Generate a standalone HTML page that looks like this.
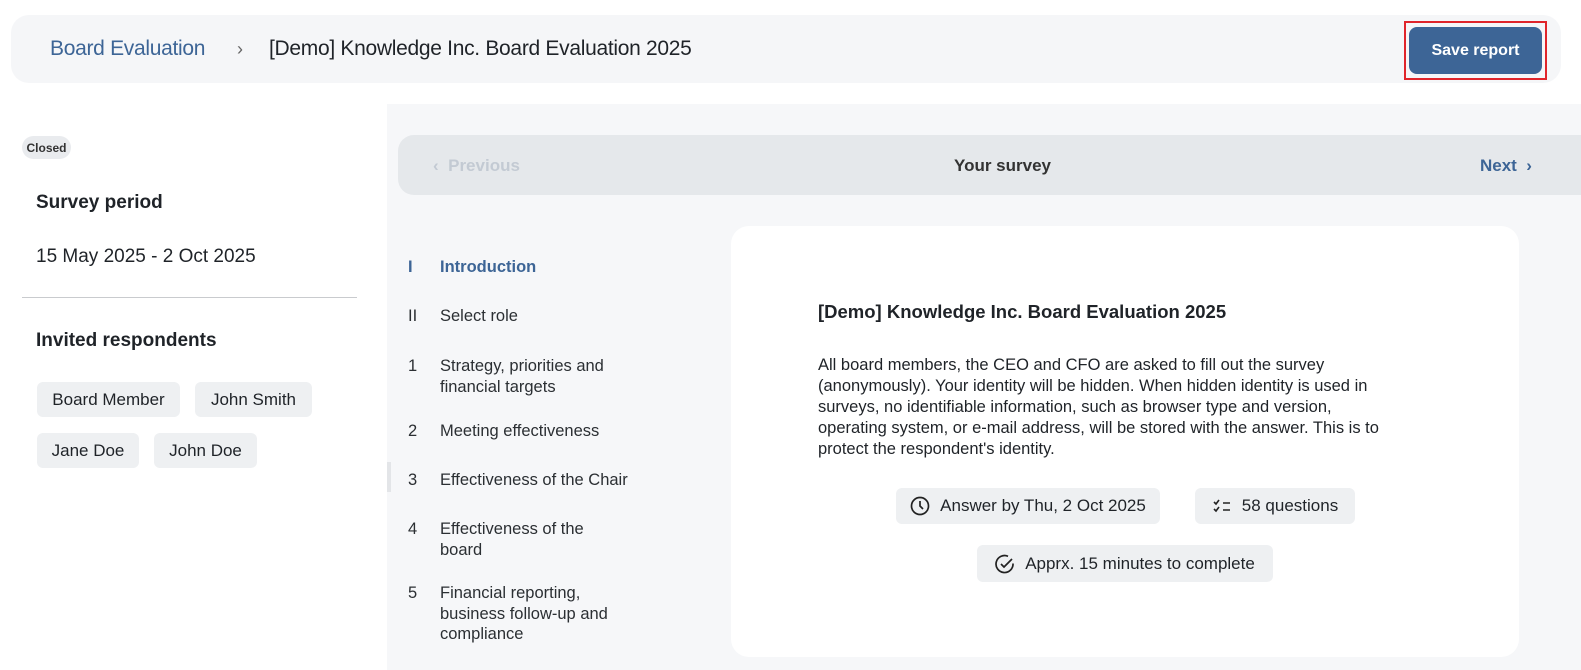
<!DOCTYPE html>
<html><head><style>
*{margin:0;padding:0;box-sizing:border-box}
body{width:1581px;height:670px;overflow:hidden;background:#fff;font-family:"Liberation Sans",sans-serif;color:#1f2328;position:relative}
.a{position:absolute;white-space:nowrap}
.chip{position:absolute;background:#eef0f2;border-radius:6px;font-size:17px;display:flex;align-items:center;justify-content:center;gap:10px}
.toc{position:absolute;font-size:16.5px;color:#2b2f33;line-height:20.5px}
.toc .n{position:absolute;left:0;width:20px}
.toc .t{position:absolute;left:32px;white-space:nowrap}
</style></head><body>
<div class="a" style="left:11px;top:15px;width:1550px;height:68px;background:#f5f6f8;border-radius:18px"></div>
<div class="a" style="left:50px;top:37px;font-size:21px;color:#3d6596;letter-spacing:-0.3px">Board Evaluation</div>
<div class="a" style="left:237px;top:39px;font-size:18px;color:#666">›</div>
<div class="a" style="left:269px;top:37px;font-size:21px;color:#1f2328;letter-spacing:-0.3px">[Demo] Knowledge Inc. Board Evaluation 2025</div>
<div class="a" style="left:1404px;top:21px;width:143px;height:59px;border:2px solid #e0252b"></div>
<div class="a" style="left:1409px;top:27px;width:133px;height:47px;background:#3d6596;border-radius:8px;color:#fff;font-weight:bold;font-size:16px;display:flex;align-items:center;justify-content:center">Save report</div>

<div class="a" style="left:22px;top:136px;width:49px;height:23px;background:#e9ebee;border-radius:12px;font-size:12px;font-weight:bold;display:flex;align-items:center;justify-content:center;color:#333">Closed</div>
<div class="a" style="left:36px;top:192px;font-size:19px;font-weight:bold">Survey period</div>
<div class="a" style="left:36px;top:246px;font-size:19px">15 May 2025 - 2 Oct 2025</div>
<div class="a" style="left:22px;top:297px;width:335px;height:1px;background:#c9cbce"></div>
<div class="a" style="left:36px;top:330px;font-size:19px;font-weight:bold">Invited respondents</div>
<div class="chip" style="left:37px;top:382px;width:143px;height:35px">Board Member</div>
<div class="chip" style="left:195px;top:382px;width:117px;height:35px">John Smith</div>
<div class="chip" style="left:37px;top:433px;width:102px;height:35px">Jane Doe</div>
<div class="chip" style="left:154px;top:433px;width:103px;height:35px">John Doe</div>

<div class="a" style="left:387px;top:104px;width:1194px;height:566px;background:#f6f7f9"></div>
<div class="a" style="left:398px;top:135px;width:1200px;height:60px;background:#e5e8eb;border-radius:16px"></div>
<div class="a" style="left:433px;top:156px;font-size:17px;font-weight:bold;color:#c3cad3">‹&nbsp;&nbsp;Previous</div>
<div class="a" style="left:954px;top:156px;font-size:17px;font-weight:bold;color:#333">Your survey</div>
<div class="a" style="left:1480px;top:156px;font-size:17px;font-weight:bold;color:#3d6596">Next&nbsp;&nbsp;›</div>

<div class="toc" style="left:408px;top:257px"><span class="n" style="color:#3d6596;font-weight:bold">I</span><span class="t" style="color:#3d6596;font-weight:bold">Introduction</span></div>
<div class="toc" style="left:408px;top:306px"><span class="n">II</span><span class="t">Select role</span></div>
<div class="toc" style="left:408px;top:356px"><span class="n">1</span><span class="t">Strategy, priorities and<br>financial targets</span></div>
<div class="toc" style="left:408px;top:421px"><span class="n">2</span><span class="t">Meeting effectiveness</span></div>
<div class="a" style="left:387px;top:462px;width:4px;height:30px;background:#e3e5e8"></div>
<div class="toc" style="left:408px;top:470px"><span class="n">3</span><span class="t">Effectiveness of the Chair</span></div>
<div class="toc" style="left:408px;top:519px"><span class="n">4</span><span class="t">Effectiveness of the<br>board</span></div>
<div class="toc" style="left:408px;top:583px"><span class="n">5</span><span class="t">Financial reporting,<br>business follow-up and<br>compliance</span></div>

<div class="a" style="left:731px;top:226px;width:788px;height:431px;background:#fff;border-radius:18px"></div>
<div class="a" style="left:818px;top:301px;font-size:18.5px;font-weight:bold">[Demo] Knowledge Inc. Board Evaluation 2025</div>
<div class="a" style="left:818px;top:355px;font-size:16.5px;line-height:21px;white-space:normal;width:610px">All board members, the CEO and CFO are asked to fill out the survey (anonymously). Your identity will be hidden. When hidden identity is used in surveys, no identifiable information, such as browser type and version,<br>operating system, or e-mail address, will be stored with the answer. This is to protect the respondent's identity.</div>
<div class="chip" style="left:896px;top:488px;width:264px;height:36px"><svg width="20" height="20" viewBox="0 0 20 20" fill="none" stroke="#222" stroke-width="1.7"><circle cx="10" cy="10" r="8.5"/><path d="M10 5v5l3 3"/></svg>Answer by Thu, 2 Oct 2025</div>
<div class="chip" style="left:1195px;top:488px;width:160px;height:36px"><svg width="20" height="16" viewBox="0 0 20 16" fill="none" stroke="#222" stroke-width="1.6"><path d="M2 4l2 2 3-4M2 11l2 2 3-4M11 5h7M11 12h7"/></svg>58 questions</div>
<div class="chip" style="left:977px;top:545px;width:296px;height:37px"><svg width="20" height="20" viewBox="0 0 20 20" fill="none" stroke="#222" stroke-width="1.7"><path d="M18 9.5A8.5 8.5 0 1 1 13 2.3"/><path d="M6 10l3 3 8-8"/></svg>Apprx. 15 minutes to complete</div>
</body></html>
